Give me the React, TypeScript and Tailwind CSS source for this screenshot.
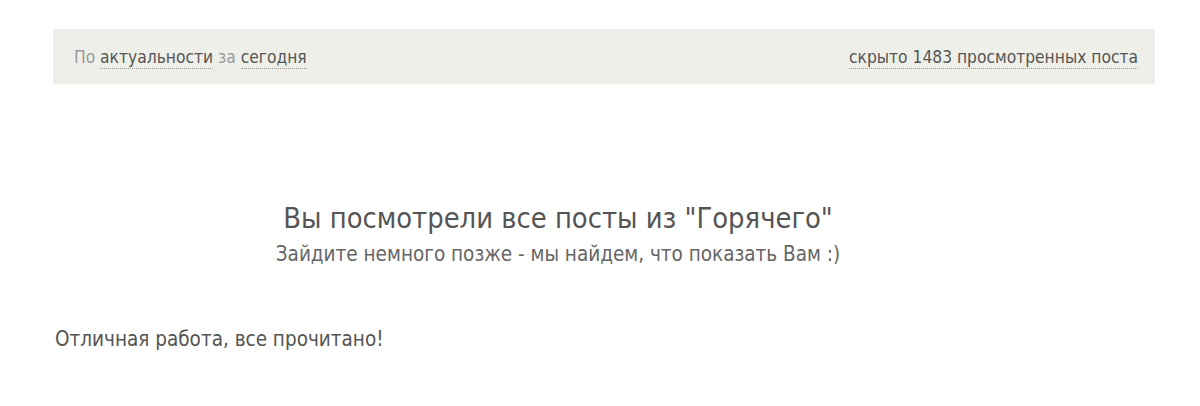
import React from "react";

export default function App() {
  const font = { fontFamily: '"DejaVu Sans Condensed", "DejaVu Sans", sans-serif' };
  return (
    <div className="w-[1200px] h-[406px] bg-white pl-[53px] pt-[29px]" style={font}>
      <div className="w-[1102px] h-[55px] bg-[#efefe9] flex items-center justify-between pl-[21px] pr-[17px] pt-[3px] text-[17.25px]">
        <div className="text-[#999]">
          По{" "}
          <span className="text-[#555] border-b border-dotted border-[#999] pb-[1px]">актуальности</span>{" "}
          за{" "}
          <span className="text-[#555] border-b border-dotted border-[#999] pb-[1px]">сегодня</span>
        </div>
        <div>
          <span className="text-[#555] border-b border-dotted border-[#999] pb-[1px]">скрыто 1483 просмотренных поста</span>
        </div>
      </div>
      <div className="w-[1010px] text-center text-[#555] pt-[117px]">
        <div className="text-[28.8px] leading-[34px]">Вы посмотрели все посты из "Горячего"</div>
        <div className="text-[20.5px] leading-[26px] mt-[6px] text-[#666]">Зайдите немного позже - мы найдем, что показать Вам :)</div>
      </div>
      <div className="text-[20.5px] text-[#555] mt-[57px] ml-[2px]">Отличная работа, все прочитано!</div>
    </div>
  );
}
